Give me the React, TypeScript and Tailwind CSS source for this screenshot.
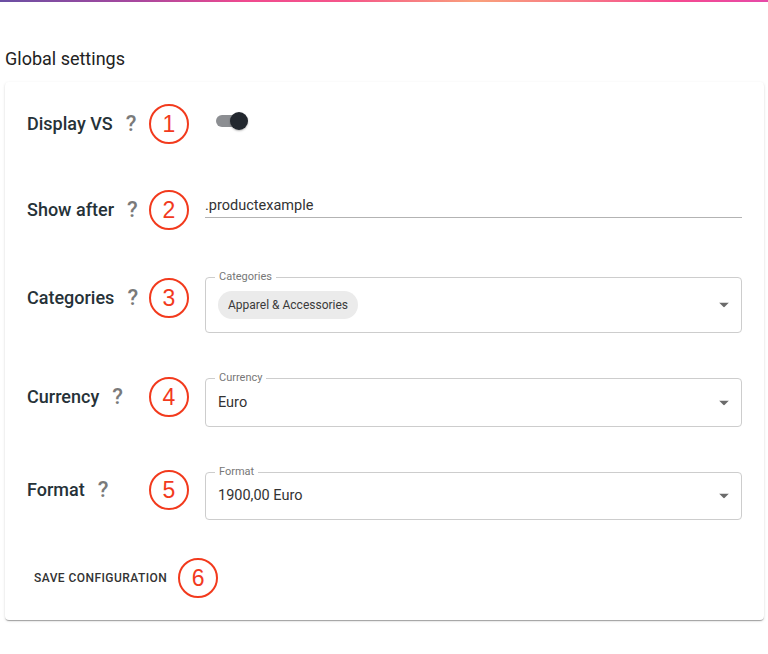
import React from 'react';

function Marker({ n, className = '' }: { n: number; className?: string }) {
  return (
    <div
      className={`flex h-[40px] w-[40px] shrink-0 items-center justify-center rounded-full border-[2.5px] border-[#f23a1d] text-[23px] leading-none text-[#f23a1d] ${className}`}
      style={{ fontFamily: '"Liberation Sans", Arial, sans-serif' }}
    >
      {n}
    </div>
  );
}

function Label({ text }: { text: string }) {
  return (
    <div className="flex w-[122px] shrink-0 items-center gap-[13px]">
      <span className="text-[18px] font-medium leading-[24px] text-[#263238]">{text}</span>
      <span className="text-[22px] font-medium leading-[24px] text-[#7a7a7a]">?</span>
    </div>
  );
}

function Caret() {
  return (
    <svg width="10" height="5" viewBox="0 0 10 5" className="absolute right-[12px] top-1/2 -translate-y-1/2">
      <path d="M0 0h10L5 5z" fill="#6b6b6b" />
    </svg>
  );
}

function Outlined({ label, height, children }: { label: string; height: string; children: React.ReactNode }) {
  return (
    <div className={`relative ml-[16px] flex flex-1 items-center rounded-[4px] border border-[#cdcdcd] pl-[12px] ${height}`}>
      <span className="absolute left-[9px] top-[-8px] bg-white px-[4px] text-[11px] leading-[14px] text-[#777]">
        {label}
      </span>
      {children}
      <Caret />
    </div>
  );
}

export default function App() {
  return (
    <div className="min-h-screen bg-white" style={{ fontFamily: 'Roboto, "Noto Sans", sans-serif' }}>
      <div className="h-[2px] w-full bg-[linear-gradient(90deg,#6a4fa3_0%,#a9479e_18%,#f04a8f_32%,#f5568a_45%,#f9a07b_62%,#f77a86_75%,#f54a90_88%,#e64aa8_100%)]" />

      <h2 className="ml-[5px] mt-[45px] text-[18px] font-normal leading-[24px] text-[#222]">Global settings</h2>

      <div className="ml-[5px] mt-[11px] w-[759px] rounded-[4px] bg-white px-[22px] pb-[22px] pt-[22px] shadow-[0_2px_1px_-1px_rgba(0,0,0,0.2),0_1px_1px_0_rgba(0,0,0,0.14),0_1px_3px_0_rgba(0,0,0,0.12)]">
        {/* Display VS */}
        <div className="flex h-[40px] items-center">
          <Label text="Display VS" />
          <Marker n={1} />
          <div className="mb-[6px] ml-[27px] flex items-center">
            <div className="h-[12px] w-[26px] rounded-full bg-[#8c8e92]" />
            <div className="ml-[-12px] h-[18px] w-[18px] rounded-full bg-[#22272e] shadow-[0_1px_2px_rgba(0,0,0,0.3)]" />
          </div>
        </div>

        {/* Show after */}
        <div className="mt-[46px] flex h-[40px] items-center">
          <Label text="Show after" />
          <Marker n={2} />
          <div className="mb-[8px] ml-[16px] flex h-[24px] flex-1 items-center border-b border-[#b3b3b3]">
            <span className="text-[14.5px] text-[#333]">.productexample</span>
          </div>
        </div>

        {/* Categories */}
        <div className="mt-[47px] flex items-start">
          <div className="mt-[1px] flex items-center">
            <Label text="Categories" />
            <Marker n={3} />
          </div>
          <Outlined label="Categories" height="h-[56px]">
            <span className="flex h-[28px] items-center rounded-full bg-[#ebebeb] px-[10px] text-[12px] text-[#3a3a3a]">
              Apparel &amp; Accessories
            </span>
          </Outlined>
        </div>

        {/* Currency */}
        <div className="mt-[44px] flex items-start">
          <div className="flex items-center">
            <Label text="Currency" />
            <Marker n={4} />
          </div>
          <div className="mt-[1px] flex flex-1">
            <Outlined label="Currency" height="h-[49px]">
              <span className="text-[14.5px] text-[#333]">Euro</span>
            </Outlined>
          </div>
        </div>

        {/* Format */}
        <div className="mt-[42px] flex items-start">
          <div className="mt-[1px] flex items-center">
            <Label text="Format" />
            <Marker n={5} />
          </div>
          <div className="mt-[3px] flex flex-1">
            <Outlined label="Format" height="h-[48px]">
              <span className="text-[14.5px] text-[#333]">1900,00 Euro</span>
            </Outlined>
          </div>
        </div>

        {/* Save */}
        <div className="mt-[38px] flex h-[40px] items-center">
          <button className="ml-[7px] text-[12px] font-medium uppercase tracking-[0.45px] text-[#333]">
            Save configuration
          </button>
          <Marker n={6} className="ml-[11px]" />
        </div>
      </div>
    </div>
  );
}
